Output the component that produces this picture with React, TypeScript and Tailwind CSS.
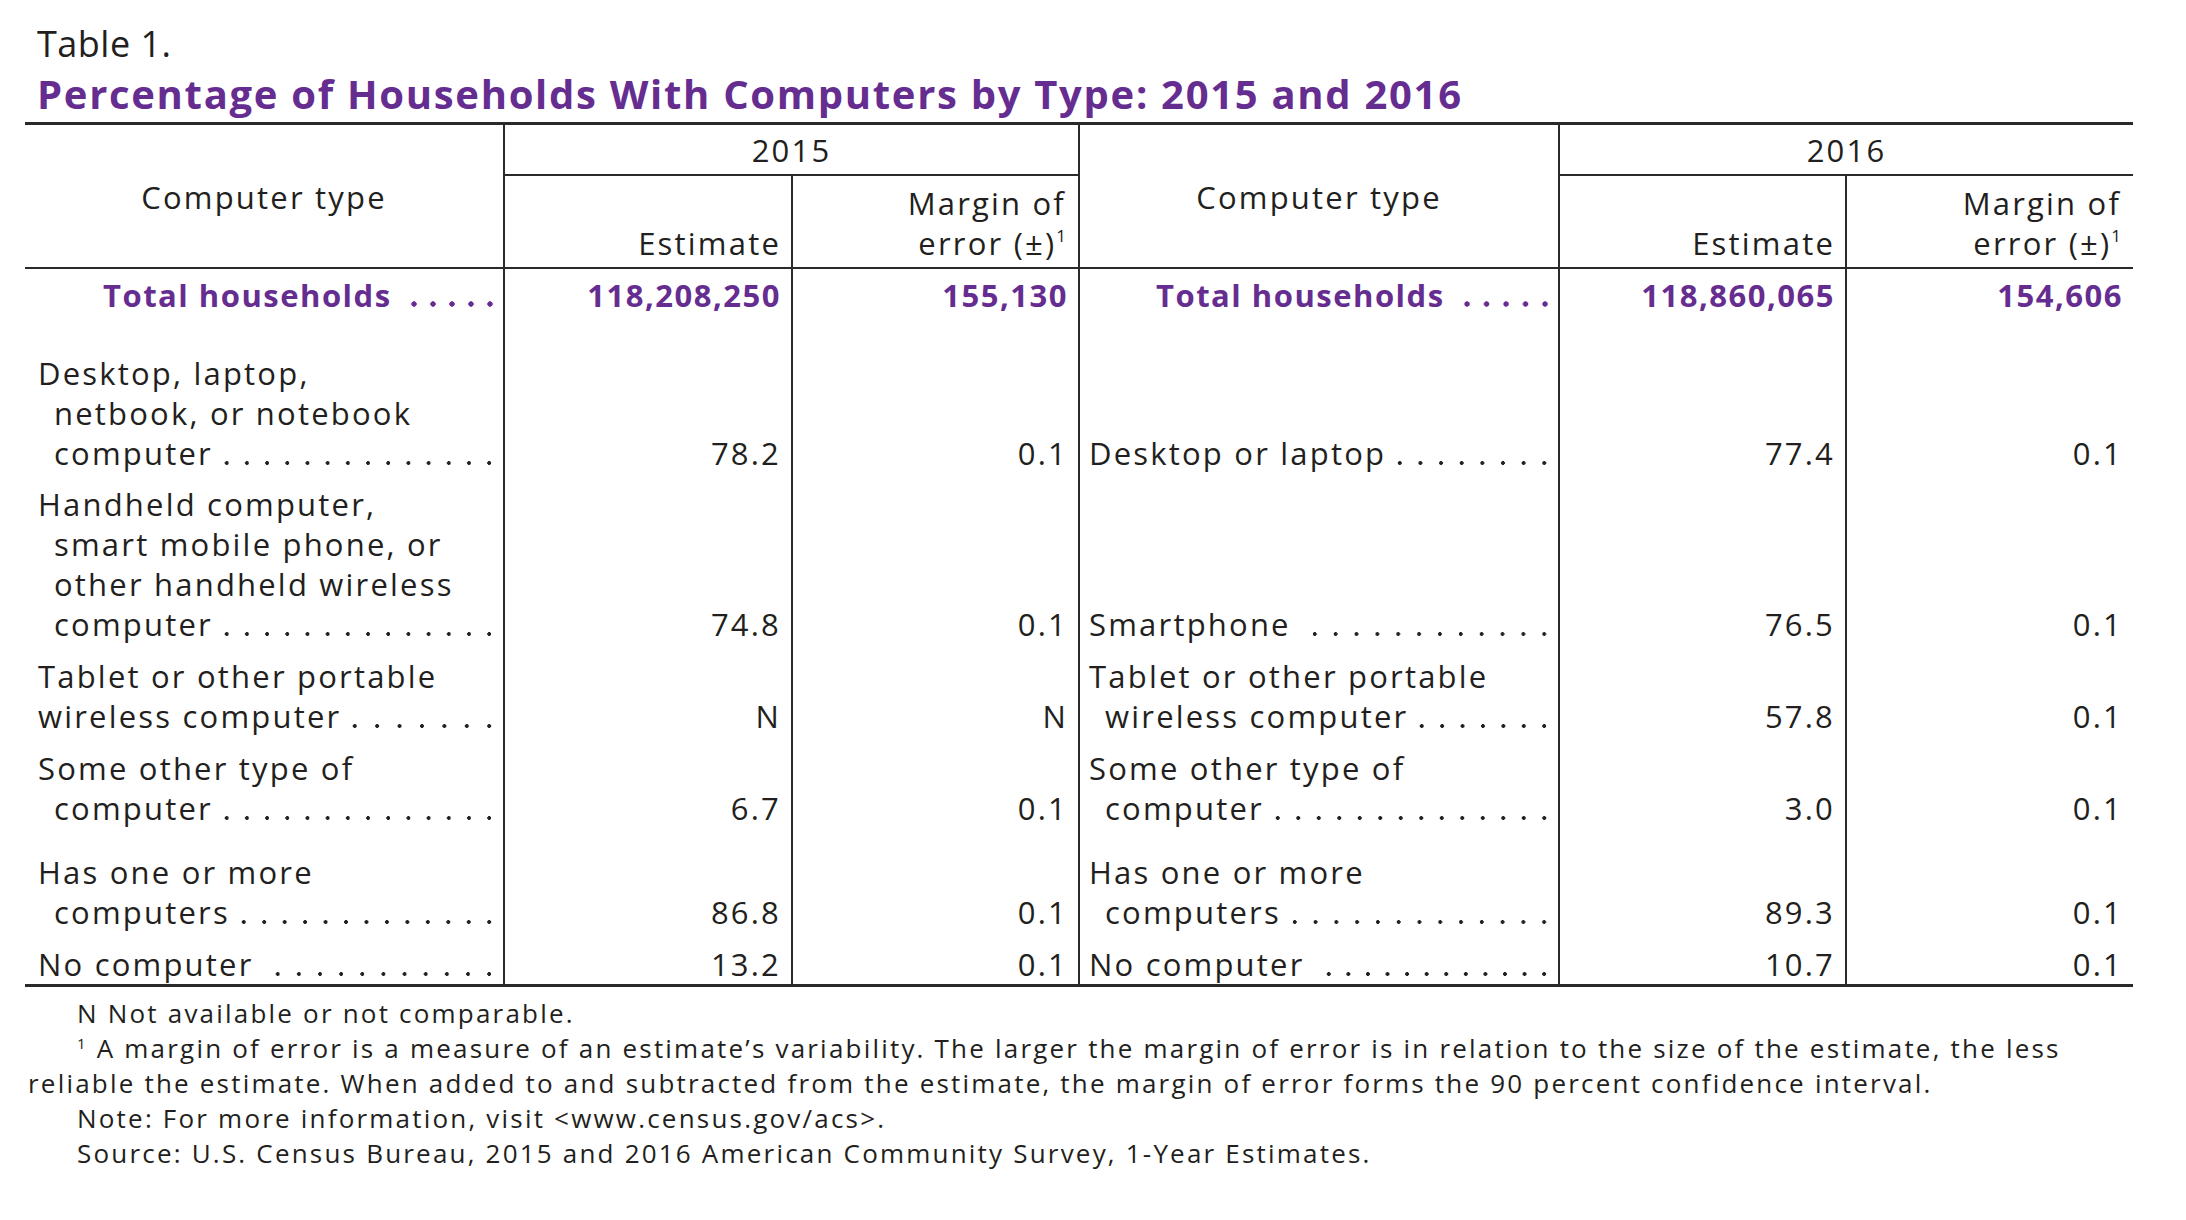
type Line = { t: string; i?: boolean };

type Row = {
  pt: string;
  a: Line[];
  aEst: string;
  aMoe: string;
  b: Line[];
  bEst: string;
  bMoe: string;
};

const rows: Row[] = [
  {
    pt: "pt-[38px]",
    a: [{ t: "Desktop, laptop," }, { t: "netbook, or notebook", i: true }, { t: "computer", i: true }],
    aEst: "78.2",
    aMoe: "0.1",
    b: [{ t: "Desktop or laptop" }],
    bEst: "77.4",
    bMoe: "0.1",
  },
  {
    pt: "pt-[11px]",
    a: [
      { t: "Handheld computer," },
      { t: "smart mobile phone, or", i: true },
      { t: "other handheld wireless", i: true },
      { t: "computer", i: true },
    ],
    aEst: "74.8",
    aMoe: "0.1",
    b: [{ t: "Smartphone " }],
    bEst: "76.5",
    bMoe: "0.1",
  },
  {
    pt: "pt-[12px]",
    a: [{ t: "Tablet or other portable" }, { t: "wireless computer" }],
    aEst: "N",
    aMoe: "N",
    b: [{ t: "Tablet or other portable" }, { t: "wireless computer", i: true }],
    bEst: "57.8",
    bMoe: "0.1",
  },
  {
    pt: "pt-[12px]",
    a: [{ t: "Some other type of" }, { t: "computer", i: true }],
    aEst: "6.7",
    aMoe: "0.1",
    b: [{ t: "Some other type of" }, { t: "computer", i: true }],
    bEst: "3.0",
    bMoe: "0.1",
  },
  {
    pt: "pt-[24px]",
    a: [{ t: "Has one or more" }, { t: "computers", i: true }],
    aEst: "86.8",
    aMoe: "0.1",
    b: [{ t: "Has one or more" }, { t: "computers", i: true }],
    bEst: "89.3",
    bMoe: "0.1",
  },
  {
    pt: "pt-[12px]",
    a: [{ t: "No computer " }],
    aEst: "13.2",
    aMoe: "0.1",
    b: [{ t: "No computer " }],
    bEst: "10.7",
    bMoe: "0.1",
  },
];

// dot leaders drawn as a repeating background, anchored on the right edge
const Leader = () => (
  <span className="ml-[4px] h-[40px] flex-1 bg-[radial-gradient(circle_at_50%_30px,#231f20_1.6px,transparent_2.2px)] bg-[length:19.5px_40px] bg-[position:right_top] bg-repeat-space" />
);

const BoldLeader = () => (
  <span className="ml-[4px] h-[40px] flex-1 bg-[radial-gradient(circle_at_50%_29px,#662d91_2.4px,transparent_3px)] bg-[length:18px_40px] bg-[position:right_top] bg-repeat-space" />
);

const Label = ({ lines }: { lines: Line[] }) => (
  <>
    {lines.map((line, idx) => {
      const last = idx === lines.length - 1;
      return (
        <div key={idx} className={line.i ? "flex whitespace-pre pl-[16px]" : "flex whitespace-pre"}>
          <span>{line.t}</span>
          {last && <Leader />}
        </div>
      );
    })}
  </>
);

const Sup = () => <span className="relative -top-[13px] text-[17px] leading-none tracking-normal">1</span>;

const App = () => {
  const border = "border-[#2a2a2a]";
  return (
    <div className="min-h-[1220px] w-[2186px] bg-white font-['Open_Sans',sans-serif] text-[#231f20]">
      <div className="pl-[25px] pr-[53px] pt-[22px]">
        <h2 className="pl-[12px] text-[36px] leading-[44px] tracking-[0.5px]">Table 1.</h2>
        <h1 className="mt-[4px] pl-[12px] text-[40px] font-bold leading-[48px] tracking-[1.7px] text-[#662d91]">
          Percentage of Households With Computers by Type: 2015 and 2016
        </h1>
        <table className={`mt-[4px] w-[2108px] table-fixed border-collapse border-y-[3px] ${border} text-[31px] leading-[40px] tracking-[2.2px]`}>
          <colgroup>
            <col className="w-[479px]" />
            <col className="w-[288px]" />
            <col className="w-[287px]" />
            <col className="w-[480px]" />
            <col className="w-[287px]" />
            <col className="w-[287px]" />
          </colgroup>
          <thead>
            <tr>
              <th rowSpan={2} className={`border-b-2 ${border} pt-[2px] text-center align-middle font-normal`}>
                Computer type
              </th>
              <th colSpan={2} className={`border-x-2 border-b-2 ${border} pb-[4px] pt-[5px] text-center font-normal`}>
                2015
              </th>
              <th rowSpan={2} className={`border-b-2 ${border} pt-[2px] text-center align-middle font-normal`}>
                Computer type
              </th>
              <th colSpan={2} className={`border-b-2 border-l-2 ${border} pb-[4px] pt-[5px] text-center font-normal`}>
                2016
              </th>
            </tr>
            <tr>
              <th className={`border-b-2 border-l-2 ${border} pb-[4px] pr-[10px] text-right align-bottom font-normal`}>
                Estimate
              </th>
              <th className={`border-x-2 border-b-2 ${border} pb-[4px] pr-[12px] pt-[7px] text-right align-bottom font-normal`}>
                <div>Margin of</div>
                <div>
                  error (±)
                  <Sup />
                </div>
              </th>
              <th className={`border-b-2 border-l-2 ${border} pb-[4px] pr-[10px] text-right align-bottom font-normal`}>
                Estimate
              </th>
              <th className={`border-b-2 border-l-2 ${border} pb-[4px] pr-[12px] pt-[7px] text-right align-bottom font-normal`}>
                <div>Margin of</div>
                <div>
                  error (±)
                  <Sup />
                </div>
              </th>
            </tr>
          </thead>
          <tbody>
            <tr className="font-bold tracking-[1.5px] text-[#662d91]">
              <td className="pl-[78px] pr-[4px] pt-[6px] align-bottom">
                <div className="flex whitespace-pre">
                  <span>Total households </span>
                  <BoldLeader />
                </div>
              </td>
              <td className={`border-l-2 ${border} pr-[10px] pt-[6px] text-right align-bottom`}>118,208,250</td>
              <td className={`border-x-2 ${border} pr-[10px] pt-[6px] text-right align-bottom`}>155,130</td>
              <td className="pl-[76px] pr-[4px] pt-[6px] align-bottom">
                <div className="flex whitespace-pre">
                  <span>Total households </span>
                  <BoldLeader />
                </div>
              </td>
              <td className={`border-l-2 ${border} pr-[10px] pt-[6px] text-right align-bottom`}>118,860,065</td>
              <td className={`border-l-2 ${border} pr-[10px] pt-[6px] text-right align-bottom`}>154,606</td>
            </tr>
            {rows.map((r, idx) => (
              <tr key={idx}>
                <td className={`pl-[13px] pr-[4px] align-bottom ${r.pt}`}>
                  <Label lines={r.a} />
                </td>
                <td className={`border-l-2 ${border} pr-[10px] text-right align-bottom ${r.pt}`}>{r.aEst}</td>
                <td className={`border-x-2 ${border} pr-[10px] text-right align-bottom ${r.pt}`}>{r.aMoe}</td>
                <td className={`pl-[9px] pr-[4px] align-bottom ${r.pt}`}>
                  <Label lines={r.b} />
                </td>
                <td className={`border-l-2 ${border} pr-[10px] text-right align-bottom ${r.pt}`}>{r.bEst}</td>
                <td className={`border-l-2 ${border} pr-[10px] text-right align-bottom ${r.pt}`}>{r.bMoe}</td>
              </tr>
            ))}
          </tbody>
        </table>
        <div className="mt-[9px] pl-[3px] text-[26px] leading-[35px] tracking-[2.2px]">
          <p className="pl-[49px]">N Not available or not comparable.</p>
          <p className="indent-[49px]">
            <span className="relative -top-[9px] text-[15px] leading-none">1</span> A margin of error is a measure of an
            estimate’s variability. The larger the margin of error is in relation to the size of the estimate, the less
            <br />
            reliable the estimate. When added to and subtracted from the estimate, the margin of error forms the 90
            percent confidence interval.
          </p>
          <p className="pl-[49px]">Note: For more information, visit &lt;www.census.gov/acs&gt;.</p>
          <p className="pl-[49px]">Source: U.S. Census Bureau, 2015 and 2016 American Community Survey, 1-Year Estimates.</p>
        </div>
      </div>
    </div>
  );
};

export default App;
